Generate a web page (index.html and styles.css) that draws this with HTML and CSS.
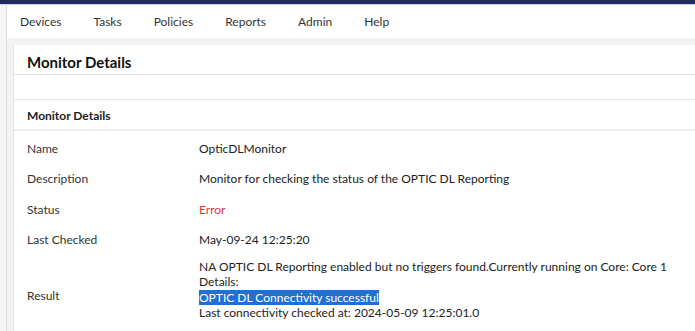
FILE: index.html
```html
<!doctype html>
<html lang="en">
  <head>
    <meta charset="UTF-8" />
    <meta name="viewport" content="width=device-width, initial-scale=1.0" />
    <title>Monitor Details</title>
    <link rel="stylesheet" href="styles.css">
  </head>
  <body>
    <div class="topbar"></div>
    <div class="layout">
      <div class="sidebar"></div>
      <div class="main">
        <nav class="menu">
          <a href="#">Devices</a>
          <a href="#">Tasks</a>
          <a href="#">Policies</a>
          <a href="#">Reports</a>
          <a href="#">Admin</a>
          <a href="#">Help</a>
        </nav>
        <div class="page">
          <div class="panel">
            <h1 class="panel-title">Monitor Details</h1>
            <div class="section">
              <h2 class="section-title">Monitor Details</h2>
              <div class="details">
                <div class="row">
                  <div class="label">Name</div>
                  <div class="value">OpticDLMonitor</div>
                </div>
                <div class="row">
                  <div class="label">Description</div>
                  <div class="value">Monitor for checking the status of the OPTIC DL Reporting</div>
                </div>
                <div class="row">
                  <div class="label">Status</div>
                  <div class="value error">Error</div>
                </div>
                <div class="row">
                  <div class="label">Last Checked</div>
                  <div class="value">May-09-24 12:25:20</div>
                </div>
                <div class="row result">
                  <div class="label">Result</div>
                  <div class="value">
                    NA OPTIC DL Reporting enabled but no triggers found.Currently running on Core: Core 1<br>
                    Details:<br>
                    <span class="selected">OPTIC DL Connectivity successful</span><br>
                    Last connectivity checked at: 2024-05-09 12:25:01.0
                  </div>
                </div>
              </div>
            </div>
          </div>
        </div>
      </div>
    </div>
  </body>
</html>
```

FILE: styles.css
```css
body {
  margin: 0;
  font-family: Lato, "Open Sans", sans-serif;
  font-size: 12px;
  color: #333;
  background: #fff;
}
.topbar {
  height: 4px;
  background: #1e2b5b;
  border-bottom: 1px solid #c9d6ee;
}
.layout {
  display: flex;
  min-height: 326px;
}
.sidebar {
  width: 6px;
  background: #f6f6f6;
  border-right: 1px solid #dcdcdc;
}
.main {
  flex: 1;
  background: #f3f3f3;
}
.menu {
  display: flex;
  height: 33px;
  align-items: center;
  background: #fff;
  padding-left: 13px;
}
.menu a {
  color: #333;
  text-decoration: none;
  font-size: 12px;
  margin-right: 32px;
}
.page {
  padding: 7px 0 0 6px;
}
.panel {
  background: #fff;
  border-left: 1px solid #e3e3e3;
  min-height: 300px;
}
.panel-title {
  margin: 0;
  font-size: 15px;
  font-weight: bold;
  color: #111;
  padding: 8px 13px 0;
  height: 21px;
  border-bottom: 1px solid #e3e3e3;
}
.section {
  margin-top: 24px;
  border-top: 1px solid #e8e8e8;
}
.section-title {
  margin: 0;
  font-size: 12px;
  font-weight: bold;
  color: #222;
  padding: 8px 13px 0;
  height: 21px;
  border-bottom: 2px solid #ededed;
}
.details {
  padding: 2px 13px 8px;
}
.row {
  display: flex;
  align-items: center;
  min-height: 30.5px;
}
.label {
  width: 172px;
}
.value {
  color: #222;
}
.result .value {
  line-height: 15.3px;
  padding: 4px 0 15px;
}
.error {
  color: #e2323b;
}
.selected {
  background: #1f6fd6;
  color: #fff;
}
```
